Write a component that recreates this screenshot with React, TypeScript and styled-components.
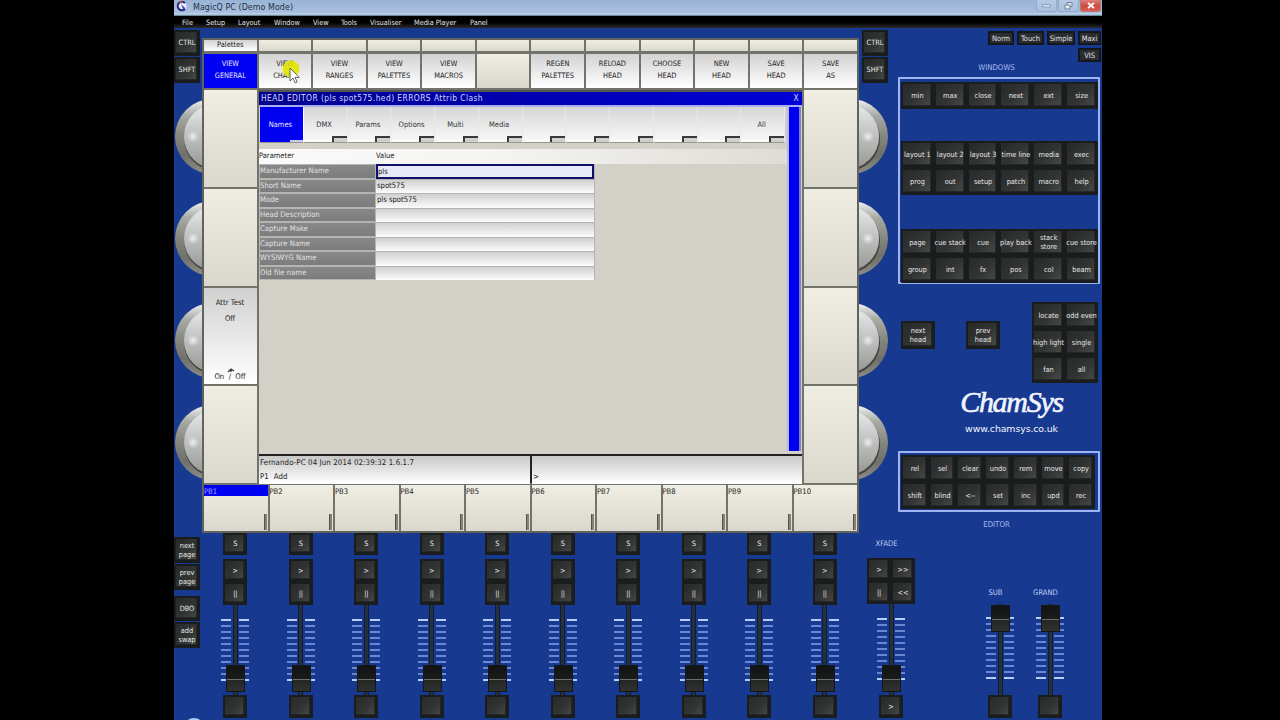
import React from "react";
import styled, { createGlobalStyle, css } from "styled-components";

const Global = createGlobalStyle`
  * { box-sizing: border-box; }
  html, body { margin: 0; padding: 0; background: #000; overflow: hidden; }
  body { font-family: "DejaVu Sans Condensed", "DejaVu Sans", sans-serif; font-size: 7.5px; font-stretch: condensed; }
`;

const Stage = styled.div`
  width: 1280px;
  height: 720px;
  background: #000;
  display: flex;
  justify-content: center;
  overflow: hidden;
  padding-right: 4px;
`;
const Desk = styled.div`
  width: 928px;
  height: 720px;
  background: #17398f;
  display: flex;
  flex-direction: column;
  overflow: hidden;
`;

/* Title and menu */
const TitleBar = styled.header`
  height: 16px;
  flex: none;
  display: flex;
  align-items: flex-start;
  background: linear-gradient(#98b4d4 0, #a9bfe0 13px, #c9e0f0 14px, #526c80 16px);
  padding: 0 1px 0 2px;
  gap: 6px;
`;
const TitleText = styled.span`
  flex: 1;
  color: #1e3148;
  font-size: 8.8px;
  line-height: 14px;
  letter-spacing: 0.07px;
`;
const WinButtons = styled.div`
  display: flex;
  gap: 1px;
`;
const WinButton = styled.span<{ $close?: boolean }>`
  width: 21px;
  height: 12px;
  display: flex;
  align-items: center;
  justify-content: center;
  border: 1px solid ${(p) => (p.$close ? "#b87878" : "#93acca")};
  border-top: 0;
  border-radius: 0 0 3px 3px;
  background: ${(p) => (p.$close ? "linear-gradient(#dc8078, #cc4a3c 55%, #d86054)" : "linear-gradient(#b4c9e4, #a9c0de)")};
`;
const MenuBar = styled.nav`
  height: 12px;
  flex: none;
  display: flex;
  padding-left: 8px;
  background: linear-gradient(#000 55%, #2c2c2c);
  color: #e6e6e6;
  font-size: 7.3px;
  line-height: 13px;
`;
const MenuItem = styled.span<{ $w: number }>`
  width: ${(p) => p.$w}px;
  white-space: nowrap;
`;

/* Upper part of the console */
const Upper = styled.div`
  height: 505px;
  flex: none;
  display: flex;
`;
const Rail = styled.aside<{ $right?: boolean }>`
  width: ${(p) => (p.$right ? 31 : 28)}px;
  flex: none;
  display: flex;
  flex-direction: column;
  align-items: ${(p) => (p.$right ? "flex-start" : "flex-end")};
  overflow: hidden;
`;
const RailKeys = styled.div<{ $right?: boolean }>`
  display: flex;
  flex-direction: column;
  gap: 1px;
  width: 100%;
  height: 71px;
  padding: 2px 2px 0 ${(p) => (p.$right ? 3 : 0)}px;
`;
const Knobs = styled.div`
  display: flex;
  flex-direction: column;
  gap: 27px;
`;
const Knob = styled.div<{ $right?: boolean }>`
  width: ${(p) => (p.$right ? 29 : 27)}px;
  height: 75px;
  overflow: hidden;
  display: flex;
  align-items: center;
  justify-content: ${(p) => (p.$right ? "flex-end" : "flex-start")};
`;
const KnobDisc = styled.div<{ $right?: boolean }>`
  width: 75px;
  height: 75px;
  flex: none;
  border-radius: 50%;
  display: flex;
  align-items: center;
  padding-left: ${(p) => (p.$right ? 1 : 9)}px;
  background: linear-gradient(#eceeee 2%, #a8aaa4 22%, #85867e 50%, #70716a 75%, #8b8c86 100%);
`;
const KnobFace = styled.div<{ $right?: boolean }>`
  width: 65px;
  height: 65px;
  border-radius: 50%;
  background:
    radial-gradient(circle at ${(p) => (p.$right ? "83%" : "14%")} 50%, #ececec 0, transparent 6px),
    linear-gradient(#e9ebec, #bfc1c1 48%, #aeb0ae 70%, #969792);
  box-shadow: ${(p) => (p.$right ? "1px" : "0")} 2px 0 #45453f;
`;

const Key = styled.div<{ $w?: number; $h?: number; $size?: number }>`
  width: ${(p) => (p.$w ? p.$w + "px" : "auto")};
  height: ${(p) => p.$h ?? 26}px;
  flex: none;
  min-width: 0;
  display: flex;
  align-items: center;
  justify-content: center;
  text-align: center;
  white-space: pre;
  padding-left: 1px;
  background: linear-gradient(135deg, #282a2a, #323434 55%, #484a48);
  border: solid #1a1d1e;
  border-width: 2px 3px 3px 2px;
  box-shadow: inset -1px -1px 0 #252727;
  color: #e8e8e8;
  font-size: ${(p) => p.$size ?? 7.3}px;
  line-height: 9px;
`;

/* Touch screen */
const Screen = styled.main`
  width: 657px;
  height: 495px;
  flex: none;
  margin-top: 10px;
  border: 2px solid #62625e;
  background: #73736d;
  display: flex;
  flex-direction: column;
`;
const SoftRow = styled.div<{ $h: number; $gap: number }>`
  display: grid;
  grid-template-columns: repeat(12, 1fr);
  grid-template-rows: 100%;
  column-gap: 2px;
  height: ${(p) => p.$h}px;
  margin-bottom: ${(p) => p.$gap}px;
  flex: none;
`;
const cream = "linear-gradient(#f0ede2, #dad7cc)";
const SoftKey = styled.div<{ $kind?: "blank" | "text" | "on" }>`
  position: relative;
  display: flex;
  align-items: center;
  justify-content: center;
  text-align: center;
  white-space: pre;
  line-height: 12px;
  font-size: 7.4px;
  min-width: 0;
  padding: 0 0 2px;
  color: ${(p) => (p.$kind === "on" ? "#e8e8ff" : "#222")};
  background: ${(p) =>
    p.$kind === "on" ? "#0000f2" : p.$kind === "text" ? "linear-gradient(#d2d2d2, #ffffff)" : cream};
`;
const Middle = styled.div`
  display: grid;
  grid-template-columns: 53px 543px 53px;
  column-gap: 2px;
  height: 393px;
  flex: none;
`;
const SideColumn = styled.div`
  display: grid;
  grid-template-rows: 97px 97px 96px 97px;
  row-gap: 2px;
`;
const SideCell = styled.div<{ $text?: boolean }>`
  position: relative;
  background: ${(p) => (p.$text ? "linear-gradient(#d0d0d0, #fff)" : cream)};
  padding: 7px 1px 1px 0;
  display: flex;
  flex-direction: column;
  align-items: center;
  line-height: 16px;
  color: #222;
  font-size: 7.7px;
`;
const Toggle = styled.span`
  margin-top: auto;
  line-height: 12px;
  white-space: pre;
`;
const Turn = styled.svg`
  position: absolute;
  left: 23px;
  bottom: 4px;
  width: 9px;
  height: 12px;
`;

const Window = styled.section`
  display: flex;
  flex-direction: column;
  background: #d3d0c8;
  min-width: 0;
`;
const WindowTitle = styled.div`
  height: 17px;
  flex: none;
  display: flex;
  justify-content: space-between;
  padding: 0 3px 0 2px;
  border-top: 2px solid #55554f;
  border-bottom: 2px solid #a9adee;
  background: linear-gradient(90deg, #00008c, #0000d8);
  color: #d2d8ff;
  font-size: 8.4px;
  line-height: 13px;
  letter-spacing: 0.43px;
  white-space: pre;
`;
const WindowBody = styled.div`
  flex: 1;
  display: flex;
  min-height: 0;
  border-bottom: 2px solid #202020;
`;
const Content = styled.div`
  flex: 1;
  min-width: 0;
`;
const ScrollBar = styled.div`
  width: 14px;
  margin: 0 1px 3px 0;
  border-left: 2px solid #b8b8f0;
  border-right: 2px solid #8080c0;
  background: #0000f0;
`;
const Tabs = styled.div`
  display: grid;
  grid-template-columns: repeat(12, 1fr);
  width: 525px;
  height: 36px;
  margin-left: 1px;
  background: #cfcfcf;
`;
const Tab = styled.div<{ $on?: boolean }>`
  position: relative;
  display: flex;
  align-items: center;
  justify-content: center;
  padding-right: 2px;
  font-size: 7.5px;
  color: ${(p) => (p.$on ? "#e4e4ff" : "#333")};
  background: ${(p) => (p.$on ? "#0000f0" : "linear-gradient(#d6d6d6, #fafafa)")};
  border-right: 1px solid ${(p) => (p.$on ? "#fff" : "#e8e8e8")};
  border-bottom: 1px solid #989890;
  &::after {
    content: "";
    position: absolute;
    right: 0;
    bottom: 0;
    width: 13px;
    height: ${(p) => (p.$on ? 2 : 4)}px;
    border: solid #3a3a3a;
    border-width: ${(p) => (p.$on ? "0" : "2px 0 0 2px")};
    background: ${(p) => (p.$on ? "#c8c8f0" : "#d0d0cc")};
  }
`;
const TableHead = styled.div`
  display: grid;
  grid-template-columns: 117px 1fr;
  margin-top: 6px;
  height: 15px;
  background: linear-gradient(90deg, #fafafa, #f4f4f2 45%, #dedcd5);
  color: #222;
  font-size: 7.5px;
  line-height: 14px;
`;
const Row = styled.div`
  display: grid;
  grid-template-columns: 115px 218px;
  column-gap: 1px;
  width: 336px;
  height: 14.5px;
  padding-left: 1px;
  background: #b4b4b2;
  color: #222;
  font-size: 7.6px;
  line-height: 12px;
`;
const Name = styled.div`
  margin: 1px 0;
  background: linear-gradient(#888, #7c7c7c);
  color: #e2e2e2;
  letter-spacing: 0.05px;
`;
const Value = styled.div<{ $focus?: boolean }>`
  margin-top: 1px;
  padding-left: 1px;
  background: linear-gradient(#d0d0d0, #fcfcfc);
  ${(p) =>
    p.$focus &&
    css`
      background: #e8e8f6;
      border: 2px solid #10106a;
      margin: 0;
      padding-left: 0;
      line-height: 11px;
    `}
`;
const Status = styled.div`
  display: grid;
  grid-template-columns: 271px 1fr;
  column-gap: 2px;
  height: 27px;
  flex: none;
  background: #222;
  color: #222;
  font-size: 7.8px;
  letter-spacing: 0.12px;
`;
const StatusCell = styled.div`
  background: linear-gradient(#c8c8c8, #ffffff);
  display: flex;
  flex-direction: column;
  justify-content: flex-end;
  padding-left: 1px;
  line-height: 14px;
  white-space: nowrap;
`;
const Playbacks = styled.div`
  display: grid;
  grid-template-columns: repeat(10, 1fr);
  column-gap: 2px;
  margin-top: 2px;
  flex: 1;
`;
const Playback = styled.div`
  background: ${cream};
  display: flex;
  flex-direction: column;
  justify-content: space-between;
`;
const PlaybackName = styled.div<{ $on?: boolean }>`
  height: 11px;
  line-height: 13px;
  font-size: 7.6px;
  color: ${(p) => (p.$on ? "#a8a8ff" : "#222")};
  background: ${(p) => (p.$on ? "#0000f0" : "transparent")};
`;
const Level = styled.div`
  width: 3px;
  height: 16px;
  margin: 0 1px 1px 0;
  align-self: flex-end;
  background: #85827a;
  border-left: 1px solid #55534e;
`;

/* Right hand panel */
const RightPanel = styled.aside`
  flex: 1;
  min-width: 0;
  display: flex;
  flex-direction: column;
  padding: 3px 2px 0 8px;
`;
const Chips = styled.div`
  display: flex;
  flex: none;
  justify-content: flex-end;
  gap: 3px;
  height: 17px;
  margin-right: -1px;
`;
const Chip = styled.div<{ $w: number }>`
  width: ${(p) => p.$w}px;
  height: 14px;
  background: #2a2d2f;
  border: 2px solid #14181c;
  color: #e4e4e4;
  font-size: 7.4px;
  line-height: 11px;
  display: flex;
  justify-content: center;
`;
const PanelLabel = styled.div<{ $h: number; $line: number }>`
  height: ${(p) => p.$h}px;
  flex: none;
  line-height: ${(p) => p.$line}px;
  color: #a9b9f2;
  font-size: 7.8px;
  text-align: center;
  padding-right: 5px;
`;
const Framed = styled.div<{ $h: number; $pt?: number }>`
  height: ${(p) => p.$h}px;
  flex: none;
  border: 2px solid #9fb4f4;
  border-radius: 1px;
  padding: ${(p) => p.$pt ?? 2}px 0 0 1px;
  display: flex;
  flex-direction: column;
`;
const KeyGrid = styled.div<{ $cols: number; $w: number; $mb?: number }>`
  display: grid;
  grid-template-columns: repeat(${(p) => p.$cols}, 1fr);
  width: ${(p) => p.$w}px;
  margin-bottom: ${(p) => p.$mb ?? 0}px;
`;
const HeadRow = styled.div`
  display: flex;
  align-items: flex-start;
  height: 81px;
  margin-top: 18px;
  padding-left: 3px;
`;
const HeadKey = styled.div<{ $mr: number }>`
  margin: 19px ${(p) => p.$mr}px 0 0;
`;
const Brand = styled.div`
  display: flex;
  flex-direction: column;
  align-items: center;
  height: 68px;
  padding-left: 25px;
  color: #f2f5ff;
`;
const BrandName = styled.div`
  font: italic 30px/38px "Liberation Serif", serif;
  height: 40px;
  letter-spacing: -1.3px;
  -webkit-text-stroke: 0.6px #f2f5ff;
  white-space: nowrap;
`;
const BrandUrl = styled.div`
  font: 9.4px/12px "DejaVu Sans", sans-serif;
  letter-spacing: -0.1px;
`;

/* Fader deck */
const Deck = styled.div`
  flex: 1;
  display: flex;
  min-height: 0;
`;
const PageKeys = styled.div`
  width: 28.6px;
  height: 188px;
  flex: none;
  display: flex;
  flex-direction: column;
  gap: 1px;
  padding: 4px 2.6px 0 0;
  overflow: hidden;
  & > :nth-child(3) { margin-top: 5px; }
`;
const DeskLogo = styled.svg`
  width: 20px;
  height: 4px;
  margin: auto 0 0 10px;
  flex: none;
`;
const Strip = styled.div<{ $w: number; $pt?: number }>`
  width: ${(p) => p.$w}px;
  flex: none;
  display: flex;
  flex-direction: column;
  align-items: center;
  padding-top: ${(p) => p.$pt ?? 0}px;
`;
const StripLabel = styled.div<{ $h: number }>`
  height: ${(p) => p.$h}px;
  padding-right: 9px;
  color: #c3cff6;
  font-size: 7.6px;
  line-height: 11px;
`;
const Spacer = styled.div<{ $h: number }>`
  height: ${(p) => p.$h}px;
  flex: none;
`;
const FaderBox = styled.div<{ $h: number }>`
  position: relative;
  width: 28px;
  height: ${(p) => p.$h}px;
  flex: none;
  display: flex;
  justify-content: center;
`;
const Track = styled.div`
  width: 5px;
  height: 100%;
  background: #27313c;
  border: solid #101b38;
  border-width: 0 1px;
`;
const Ticks = styled.div<{ $side: "left" | "right"; $top: number }>`
  position: absolute;
  ${(p) => p.$side}: 0;
  top: ${(p) => p.$top}px;
  width: 10px;
  height: 62px;
  display: flex;
  flex-direction: column;
  justify-content: space-between;
`;
const Tick = styled.i<{ $major?: boolean }>`
  height: 2px;
  background: ${(p) => (p.$major ? "#b7cdfa" : "#6886d2")};
`;
const Cap = styled.div<{ $top: number }>`
  position: absolute;
  left: 5px;
  top: ${(p) => p.$top}px;
  width: 19px;
  height: 27px;
  background: linear-gradient(#121414, #1a1c1c 50%, #6c706c 51%, #6c706c 57%, #252725 58%, #303230);
  border: 1px solid #14181c;
`;
const MasterStrips = styled.div`
  display: flex;
  margin-left: auto;
  margin-right: 27px;
`;

const Fader = ({ h, tick, cap }: { h: number; tick: number; cap: number }) => (
  <FaderBox $h={h}>
    <Track />
    {(["left", "right"] as const).map((side) => (
      <Ticks key={side} $side={side} $top={tick}>
        {Array.from({ length: 11 }, (_, i) => (
          <Tick key={i} $major={i === 0 || i === 10} />
        ))}
      </Ticks>
    ))}
    <Cap $top={cap} />
  </FaderBox>
);

const Pointer = styled.svg`
  position: absolute;
  left: 20px;
  top: 3px;
  width: 24px;
  height: 30px;
`;

const menu: [string, number][] = [
  ["File", 24], ["Setup", 32], ["Layout", 36], ["Window", 39], ["View", 28],
  ["Tools", 29], ["Visualiser", 44], ["Media Player", 56], ["Panel", 30],
];
const softKeys = [
  "VIEW\nGENERAL", "VIEW\nCHANS", "VIEW\nRANGES", "VIEW\nPALETTES", "VIEW\nMACROS", "",
  "REGEN\nPALETTES", "RELOAD\nHEAD", "CHOOSE\nHEAD", "NEW\nHEAD", "SAVE\nHEAD", "SAVE\nAS",
];
const tabs = ["Names", "DMX", "Params", "Options", "Multi", "Media", "", "", "", "", "", "All"];
const rows = [
  ["Manufacturer Name", "pls"], ["Short Name", "spot575"], ["Mode", "pls spot575"], ["Head Description", ""],
  ["Capture Make", ""], ["Capture Name", ""], ["WYSIWYG Name", ""], ["Old file name", ""],
];
const windowKeys = [
  { keys: ["min", "max", "close", "next", "ext", "size"], mb: 32 },
  { keys: ["layout 1", "layout 2", "layout 3", "time line", "media", "exec", "prog", "out", "setup", "patch", "macro", "help"], mb: 34 },
  { keys: ["page", "cue stack", "cue", "play back", "stack\nstore", "cue store", "group", "int", "fx", "pos", "col", "beam"], mb: 0 },
];
const editorKeys = ["rel", "sel", "clear", "undo", "rem", "move", "copy", "shift", "blind", "<--", "set", "inc", "upd", "rec"];

const SideRail = ({ right }: { right?: boolean }) => (
  <Rail $right={right}>
    <RailKeys $right={right}>
      <Key>CTRL</Key>
      <Key>SHFT</Key>
    </RailKeys>
    <Knobs>
      {[0, 1, 2, 3].map((i) => (
        <Knob key={i} $right={right}>
          <KnobDisc $right={right}>
            <KnobFace $right={right} />
          </KnobDisc>
        </Knob>
      ))}
    </Knobs>
  </Rail>
);

export default function App() {
  return (
    <Stage>
      <Global />
      <Desk>
        <TitleBar>
          <svg width="11" height="13" viewBox="0 0 11 13">
            <circle cx="5.5" cy="6" r="5" fill="#e8eaff" />
            <path d="M9 3A4.3 4.3 0 1 0 9 9" fill="none" stroke="#24247c" strokeWidth="2" />
            <path d="M5 4l3 7 1-3z" fill="#3b3bc0" />
            <circle cx="5" cy="2" r="1.2" fill="#d05030" />
          </svg>
          <TitleText>MagicQ PC (Demo Mode)</TitleText>
          <WinButtons>
            <WinButton>
              <svg width="9" height="4"><rect x=".5" y=".5" width="8" height="2.5" fill="#d8e2f0" stroke="#8da2bb" /></svg>
            </WinButton>
            <WinButton>
              <svg width="9" height="8" fill="#e8eef6" stroke="#6f849c"><path d="M3 .5h5v4H3z" /><path d="M1 3h5v4H1z" /></svg>
            </WinButton>
            <WinButton $close>
              <svg width="8" height="7"><path d="M1 1l6 5M7 1L1 6" stroke="#fff" strokeWidth="1.7" /></svg>
            </WinButton>
          </WinButtons>
        </TitleBar>
        <MenuBar>
          {menu.map(([label, w]) => (
            <MenuItem key={label} $w={w}>{label}</MenuItem>
          ))}
        </MenuBar>

        <Upper>
          <SideRail />
          <Screen>
            <SoftRow $h={11} $gap={3}>
              {softKeys.map((_, i) => (
                <SoftKey key={i} $kind={i === 0 ? "text" : "blank"}>{i === 0 ? "Palettes" : ""}</SoftKey>
              ))}
            </SoftRow>
            <SoftRow $h={34} $gap={2}>
              {softKeys.map((label, i) => (
                <SoftKey key={i} $kind={i === 0 ? "on" : label ? "text" : "blank"}>
                  {label}
                  {i === 1 && (
                    <Pointer viewBox="0 0 24 30">
                      <circle cx="12" cy="12" r="8.5" fill="#e6e600" fillOpacity="0.9" />
                      <path d="M11 11v13l3-3 2.2 5 2-1-2.2-4.6h4.2z" fill="#fff" stroke="#555" strokeWidth=".9" />
                    </Pointer>
                  )}
                </SoftKey>
              ))}
            </SoftRow>
            <Middle>
              <SideColumn>
                <SideCell />
                <SideCell />
                <SideCell $text>
                  <span>Attr Test</span>
                  <span>Off</span>
                  <Toggle>On  /  Off</Toggle>
                  <Turn viewBox="0 0 9 12"><path d="M1 4l3-3 3 2M4 1v3" fill="none" stroke="#333" strokeWidth="1.3" /></Turn>
                </SideCell>
                <SideCell />
              </SideColumn>
              <Window>
                <WindowTitle>
                  <span>HEAD EDITOR (pls spot575.hed) ERRORS Attrib Clash</span>
                  <span>X</span>
                </WindowTitle>
                <WindowBody>
                  <Content>
                    <Tabs>
                      {tabs.map((t, i) => (
                        <Tab key={i} $on={i === 0}>{t}</Tab>
                      ))}
                    </Tabs>
                    <TableHead>
                      <span>Parameter</span>
                      <span>Value</span>
                    </TableHead>
                    {rows.map(([name, value], i) => (
                      <Row key={name}>
                        <Name>{name}</Name>
                        <Value $focus={i === 0}>{value}</Value>
                      </Row>
                    ))}
                  </Content>
                  <ScrollBar />
                </WindowBody>
                <Status>
                  <StatusCell>
                    <span>Fernando-PC 04 Jun 2014 02:39:32 1.6.1.7</span>
                    <span>P1&nbsp; Add</span>
                  </StatusCell>
                  <StatusCell>
                    <span>&gt;</span>
                  </StatusCell>
                </Status>
              </Window>
              <SideColumn>
                {[0, 1, 2, 3].map((i) => <SideCell key={i} />)}
              </SideColumn>
            </Middle>
            <Playbacks>
              {Array.from({ length: 10 }, (_, i) => (
                <Playback key={i}>
                  <PlaybackName $on={i === 0}>PB{i + 1}</PlaybackName>
                  <Level />
                </Playback>
              ))}
            </Playbacks>
          </Screen>
          <SideRail right />

          <RightPanel>
            <Chips>
              <Chip $w={26}>Norm</Chip>
              <Chip $w={27}>Touch</Chip>
              <Chip $w={28}>Simple</Chip>
              <Chip $w={23}>Maxi</Chip>
            </Chips>
            <Chips>
              <Chip $w={23}>VIS</Chip>
            </Chips>
            <PanelLabel $h={12} $line={6}>WINDOWS</PanelLabel>
            <Framed $h={207} $pt={3}>
              {windowKeys.map((group, i) => (
                <KeyGrid key={i} $cols={6} $w={197} $mb={group.mb}>
                  {group.keys.map((k) => <Key key={k} $h={27}>{k}</Key>)}
                </KeyGrid>
              ))}
            </Framed>
            <HeadRow>
              <HeadKey $mr={31}><Key $w={34} $h={28}>{"next\nhead"}</Key></HeadKey>
              <HeadKey $mr={32}><Key $w={34} $h={28}>{"prev\nhead"}</Key></HeadKey>
              <KeyGrid $cols={2} $w={66}>
                {["locate", "odd even", "high light", "single", "fan", "all"].map((k) => (
                  <Key key={k} $h={27}>{k}</Key>
                ))}
              </KeyGrid>
            </HeadRow>
            <Brand>
              <BrandName>ChamSys</BrandName>
              <BrandUrl>www.chamsys.co.uk</BrandUrl>
            </Brand>
            <Framed $h={61}>
              <KeyGrid $cols={7} $w={194}>
                {editorKeys.map((k) => <Key key={k} $h={27}>{k}</Key>)}
              </KeyGrid>
            </Framed>
            <PanelLabel $h={20} $line={26}>EDITOR</PanelLabel>
          </RightPanel>
        </Upper>

        <Deck>
          <PageKeys>
            <Key>{"next\npage"}</Key>
            <Key>{"prev\npage"}</Key>
            <Key $h={25}>DBO</Key>
            <Key>{"add\nswap"}</Key>
            <DeskLogo viewBox="0 0 20 4"><ellipse cx="10" cy="8" rx="9" ry="7" fill="#a8cdf4" /></DeskLogo>
          </PageKeys>
          {Array.from({ length: 10 }, (_, i) => (
            <Strip key={i} $w={65.5}>
              <Key $w={24} $h={22}>S</Key>
              <Spacer $h={4} />
              <Key $w={24} $h={23}>&gt;</Key>
              <Key $w={24} $h={23}>||</Key>
              <Fader h={90} tick={14} cap={60} />
              <Key $w={24} $h={23} />
            </Strip>
          ))}
          <Strip $w={67} $pt={5}>
            <StripLabel $h={20}>XFADE</StripLabel>
            <KeyGrid $cols={2} $w={48}>
              {[">", ">>", "||", "<<"].map((k) => <Key key={k} $h={23}>{k}</Key>)}
            </KeyGrid>
            <Fader h={91} tick={14} cap={61} />
            <Key $w={24} $h={23}>&gt;</Key>
          </Strip>
          <MasterStrips>
            {["SUB", "GRAND"].map((name) => (
              <Strip key={name} $w={50} $pt={54}>
                <StripLabel $h={17}>{name}</StripLabel>
                <Fader h={91} tick={13} cap={1} />
                <Key $w={24} $h={23} />
              </Strip>
            ))}
          </MasterStrips>
        </Deck>
      </Desk>
    </Stage>
  );
}
